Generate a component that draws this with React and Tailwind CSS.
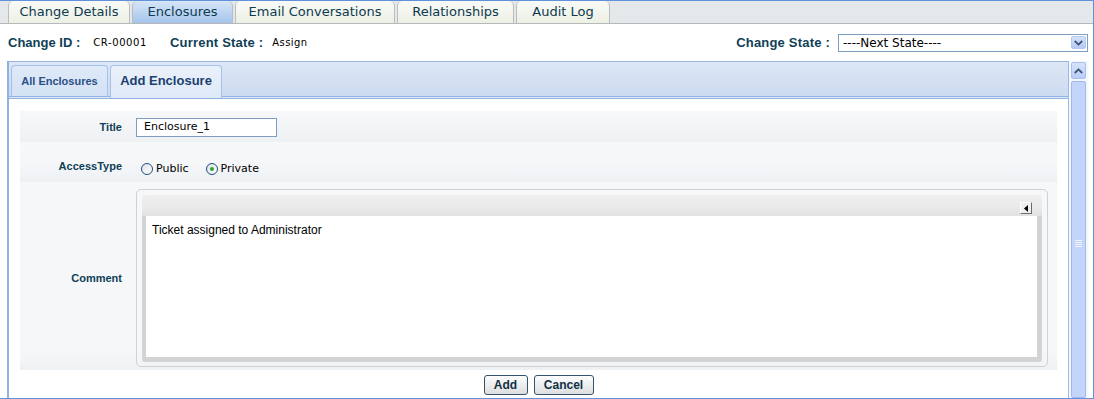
import React from "react";

const topTabs = [
  { label: "Change Details", w: "w-[122px]", active: false },
  { label: "Enclosures", w: "w-[101px]", active: true },
  { label: "Email Conversations", w: "w-[160px]", active: false },
  { label: "Relationships", w: "w-[117px]", active: false },
  { label: "Audit Log", w: "w-[94px]", active: false },
];

function Chevron({ up }) {
  return (
    <svg width="9" height="6" viewBox="0 0 9 6" className="block">
      {up ? (
        <path d="M0.8 5 L4.5 1.4 L8.2 5" fill="none" stroke="#3f5377" strokeWidth="1.8" />
      ) : (
        <path d="M0.8 1 L4.5 4.6 L8.2 1" fill="none" stroke="#3f5377" strokeWidth="1.8" />
      )}
    </svg>
  );
}

function Radio({ checked }) {
  return (
    <span className="w-[12px] h-[12px] rounded-full border border-[#1f4d7a] bg-gradient-to-br from-[#dfe3e8] to-white flex items-center justify-center">
      {checked && <span className="w-[4px] h-[4px] rounded-full bg-[#2ea52e]" />}
    </span>
  );
}

export default function App() {
  return (
    <div className="w-[1094px] h-[399px] overflow-hidden bg-white border-t border-r border-b border-[#5f92d8] flex flex-col">
      {/* top tab bar */}
      <div className="h-[23px] shrink-0 bg-[#e4e8eb] border-b border-[#b6b9b9] flex items-end pl-[8px] gap-[2px]">
        {topTabs.map((t) => (
          <div
            key={t.label}
            className={`${t.w} h-[22px] rounded-t-[5px] border-l border-r border-[#b9bdc0] flex items-center justify-center font-['DejaVu_Sans',sans-serif] text-[13px] text-[#0d3a4f] ${
              t.active
                ? "bg-gradient-to-b from-[#d7e6f8] to-[#a5c4ec]"
                : "bg-gradient-to-b from-[#f9faf8] to-[#edf0e4]"
            }`}
          >
            {t.label}
          </div>
        ))}
      </div>

      {/* header row */}
      <div className="h-[37px] shrink-0 flex items-center pl-[8px] pr-[5px] font-['Liberation_Sans',sans-serif]">
        <span className="font-bold text-[13px] text-[#0f3f56]">Change ID :</span>
        <span className="ml-[13px] font-['DejaVu_Sans',sans-serif] text-[10px] text-black tracking-[0.6px]">CR-00001</span>
        <span className="ml-[23px] font-bold text-[13px] text-[#0f3f56] tracking-[0.2px]">Current State :</span>
        <span className="ml-[9px] font-['DejaVu_Sans',sans-serif] text-[10px] text-black tracking-[0.4px]">Assign</span>
        <span className="ml-auto font-bold text-[13px] text-[#0f3f56] tracking-[0.2px]">Change State :</span>
        <div className="ml-[8px] w-[250px] h-[18px] border border-[#7f9dc0] bg-white flex items-center">
          <span className="pl-[4px] font-['DejaVu_Sans',sans-serif] text-[12px] text-black">----Next State----</span>
          <span className="ml-auto mr-[1px] w-[15px] h-[13px] rounded-[2px] border border-[#b3c7ef] bg-gradient-to-b from-[#d4e1fb] to-[#b4c9f3] flex items-center justify-center">
            <Chevron />
          </span>
        </div>
      </div>

      {/* panel */}
      <div className="flex-1 min-h-0 flex ml-[7px] border-l-2 border-[#8fb1e3]">
        <div className="w-[1060px] flex flex-col border-r border-[#9dbae5]">
          {/* sub tab strip */}
          <div className="h-[35px] shrink-0 border-t border-[#98b8e4] bg-gradient-to-b from-[#dce7f5] to-[#cddbf0] flex items-end pl-[2px] gap-[2px]">
            <div className="w-[97px] h-[31px] rounded-t-[4px] border-t border-l border-r border-[#a5c1e9] bg-gradient-to-b from-[#dfe9f8] to-[#d4e2f5] flex items-center justify-center font-['Liberation_Sans',sans-serif] font-bold text-[11px] text-[#2a5186]">
              All Enclosures
            </div>
            <div className="relative -mb-[2px] w-[112px] h-[33px] rounded-t-[4px] border-t border-l border-r border-[#a5c1e9] bg-gradient-to-b from-[#eaf1fb] to-[#dfe9f8] flex items-center justify-center pb-[2px] font-['Liberation_Sans',sans-serif] font-bold text-[13px] text-[#1c3f6f]">
              Add Enclosure
            </div>
          </div>
          <div className="h-[3px] shrink-0 border-t border-b border-[#8fb2e3] bg-[#dfe9f8]" />

          {/* content */}
          <div className="flex-1 min-h-0 bg-white flex flex-col">
            <div className="mt-[12px] ml-[11px] mr-[11px] bg-[#f6f7f9] flex flex-col">
              {/* Title row */}
              <div className="h-[31px] flex items-center pt-[1px] bg-gradient-to-b from-[#f7f8fa] via-[#f2f4f6] to-[#eef1f4]">
                <div className="w-[116px] pr-[14px] text-right font-['Liberation_Sans',sans-serif] font-bold text-[11px] text-[#0f3f56]">
                  Title
                </div>
                <div className="w-[141px] h-[19px] border border-[#7f9dbf] bg-white flex items-center pl-[7px] font-['DejaVu_Sans',sans-serif] text-[11px] text-black">
                  Enclosure_1
                </div>
              </div>
              {/* AccessType row */}
              <div className="h-[40px] flex items-start bg-gradient-to-b from-[#f7f8fa] via-[#f5f7f9] to-[#eef1f4]">
                <div className="w-[116px] pr-[14px] pt-[17px] leading-[14px] text-right font-['Liberation_Sans',sans-serif] font-bold text-[11px] text-[#0f3f56]">
                  AccessType
                </div>
                <div className="pt-[20px] pl-[5px] flex items-center font-['DejaVu_Sans',sans-serif] text-[11px] text-black leading-[13px]">
                  <Radio />
                  <span className="ml-[3px]">Public</span>
                  <span className="ml-[17px]"><Radio checked /></span>
                  <span className="ml-[3px]">Private</span>
                </div>
              </div>
              {/* Comment row */}
              <div className="h-[188px] flex bg-gradient-to-b from-[#f6f7f9] via-[#f6f7f9] via-[90%] to-[#eef1f4]">
                <div className="w-[116px] pr-[14px] flex items-center justify-end pt-[4px] font-['Liberation_Sans',sans-serif] font-bold text-[11px] text-[#0f3f56]">
                  Comment
                </div>
                <div className="mt-[7px] w-[912px] h-[178px] rounded-[5px] border border-[#cfd1d3] p-[5px] pb-[4px] flex flex-col">
                  <div className="h-[21px] shrink-0 rounded-t-[3px] bg-gradient-to-b from-[#efefef] via-[#ebebeb] to-[#e1e1e1] flex items-start justify-end pr-[10px] pt-[7px]">
                    <div className="w-[12px] h-[12px] bg-[#f0f0f0] border-t border-l border-t-white border-l-white border-r border-b border-r-[#6c6c6c] border-b-[#6c6c6c] flex items-center pl-[3px]">
                      <svg width="4" height="7" viewBox="0 0 4 7"><path d="M4 0 L0 3.5 L4 7 Z" fill="#000" /></svg>
                    </div>
                  </div>
                  <div className="flex-1 bg-[#d3d3d3] px-[4px] pr-[5px] pb-[5px] rounded-b-[3px] flex">
                    <div className="flex-1 bg-white pt-[7px] pl-[6px] font-['Liberation_Sans',sans-serif] text-[12px] text-black leading-[14px]">
                      Ticket assigned to Administrator
                    </div>
                  </div>
                </div>
              </div>
            </div>
            {/* buttons */}
            <div className="mt-[5px] flex justify-center gap-[6px]">
              <button className="w-[44px] h-[20px] rounded-[3px] border border-[#34536e] bg-gradient-to-b from-[#fdfdfd] to-[#dedede] font-['Liberation_Sans',sans-serif] font-bold text-[12px] text-[#0e3146] leading-none">
                Add
              </button>
              <button className="w-[60px] h-[20px] rounded-[3px] border border-[#34536e] bg-gradient-to-b from-[#fdfdfd] to-[#dedede] font-['Liberation_Sans',sans-serif] font-bold text-[12px] text-[#0e3146] leading-none">
                Cancel
              </button>
            </div>
          </div>
        </div>

        {/* scrollbar */}
        <div className="w-[19px] shrink-0 flex flex-col px-[2px] pt-[1px] bg-[#f4f7fd]">
          <div className="h-[17px] shrink-0 rounded-[2px] border border-[#a9c0ef] bg-gradient-to-b from-[#d7e3fc] to-[#b8cdf6] flex items-center justify-center">
            <Chevron up />
          </div>
          <div className="mt-[2px] flex-1 rounded-[2px] border border-[#9fb9ef] bg-[#c3d5fb] flex items-center justify-center">
            <div className="flex flex-col gap-[1px] pt-[8px]">
              <span className="block w-[7px] h-[1px] bg-[#eef3fe]" />
              <span className="block w-[7px] h-[1px] bg-[#eef3fe]" />
              <span className="block w-[7px] h-[1px] bg-[#eef3fe]" />
              <span className="block w-[7px] h-[1px] bg-[#eef3fe]" />
            </div>
          </div>
        </div>
        <div className="flex-1 bg-white" />
      </div>
    </div>
  );
}
